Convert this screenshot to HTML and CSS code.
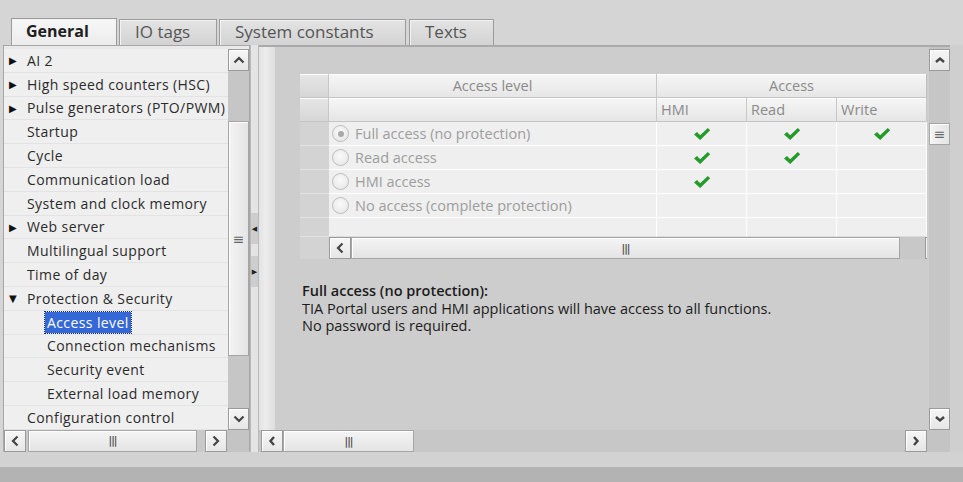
FILE: index.html
```html
<!DOCTYPE html>
<html>
<head>
<meta charset="utf-8">
<link rel="stylesheet" href="styles.css">
</head>
<body>
<div class="app">
  <div class="tabbar">
    <div class="tab active t1">General</div>
    <div class="tab t2">IO tags</div>
    <div class="tab t3">System constants</div>
    <div class="tab t4">Texts</div>
  </div>
  <div class="main">
    <div class="left">
      <div class="left-top">
        <ul class="tree">
          <li class="row"><span class="arr">&#9654;</span>AI 2</li>
          <li class="row"><span class="arr">&#9654;</span>High speed counters (HSC)</li>
          <li class="row"><span class="arr">&#9654;</span>Pulse generators (PTO/PWM)</li>
          <li class="row"><span class="arr"></span>Startup</li>
          <li class="row"><span class="arr"></span>Cycle</li>
          <li class="row"><span class="arr"></span>Communication load</li>
          <li class="row"><span class="arr"></span>System and clock memory</li>
          <li class="row"><span class="arr">&#9654;</span>Web server</li>
          <li class="row"><span class="arr"></span>Multilingual support</li>
          <li class="row"><span class="arr"></span>Time of day</li>
          <li class="row"><span class="arr down">&#9660;</span>Protection &amp; Security</li>
          <li class="row sub"><span class="sel">Access level</span></li>
          <li class="row sub">Connection mechanisms</li>
          <li class="row sub">Security event</li>
          <li class="row sub">External load memory</li>
          <li class="row"><span class="arr"></span>Configuration control</li>
        </ul>
        <div class="vscroll lvs">
          <div class="sbtn"><svg width="12" height="8" viewBox="0 0 12 8"><polyline points="1.5,6.5 6,2 10.5,6.5" fill="none" stroke="#444" stroke-width="2.2"/></svg></div>
          <div class="track t-top-l"></div>
          <div class="thumb lthumb"><span class="grip">&#8801;</span></div>
          <div class="track t-bot-l"></div>
          <div class="sbtn"><svg width="12" height="8" viewBox="0 0 12 8"><polyline points="1.5,1.5 6,6 10.5,1.5" fill="none" stroke="#444" stroke-width="2.2"/></svg></div>
        </div>
      </div>
      <div class="hscroll lhs">
        <div class="sbtn h"><svg width="8" height="12" viewBox="0 0 8 12"><polyline points="6.5,1.5 2,6 6.5,10.5" fill="none" stroke="#444" stroke-width="2.2"/></svg></div>
        <div class="hthumb lht"><span class="hgrip">|||</span></div>
        <div class="htrack"></div>
        <div class="sbtn h"><svg width="8" height="12" viewBox="0 0 8 12"><polyline points="1.5,1.5 6,6 1.5,10.5" fill="none" stroke="#444" stroke-width="2.2"/></svg></div>
        <div class="corner"></div>
      </div>
    </div>
    <div class="splitter">
      <div class="sp-gap1"></div>
      <div class="sp-btn">&#9664;</div>
      <div class="sp-gap2"></div>
      <div class="sp-btn">&#9654;</div>
    </div>
    <div class="right">
      <div class="right-top">
        <div class="strip"></div>
        <div class="content">
          <div class="table">
            <div class="g-rh hd"></div>
            <div class="g-h1 hd span1">Access level</div>
            <div class="g-h1 hd span3">Access</div>
            <div class="g-rh hd"></div>
            <div class="hd"></div>
            <div class="hd sub">HMI</div>
            <div class="hd sub">Read</div>
            <div class="hd sub">Write</div>

            <div class="rh"></div>
            <div class="cell lbl"><span class="radio on"></span>Full access (no protection)</div>
            <div class="cell ck"><svg class="check" width="18" height="14" viewBox="0 0 18 14"><path d="M1 7.5 L4 5 L7.2 8.2 L14.8 1 L17.2 3.3 L7.2 13 Z" fill="#239a2a"/></svg></div>
            <div class="cell ck"><svg class="check" width="18" height="14" viewBox="0 0 18 14"><path d="M1 7.5 L4 5 L7.2 8.2 L14.8 1 L17.2 3.3 L7.2 13 Z" fill="#239a2a"/></svg></div>
            <div class="cell ck"><svg class="check" width="18" height="14" viewBox="0 0 18 14"><path d="M1 7.5 L4 5 L7.2 8.2 L14.8 1 L17.2 3.3 L7.2 13 Z" fill="#239a2a"/></svg></div>

            <div class="rh"></div>
            <div class="cell lbl"><span class="radio"></span>Read access</div>
            <div class="cell ck"><svg class="check" width="18" height="14" viewBox="0 0 18 14"><path d="M1 7.5 L4 5 L7.2 8.2 L14.8 1 L17.2 3.3 L7.2 13 Z" fill="#239a2a"/></svg></div>
            <div class="cell ck"><svg class="check" width="18" height="14" viewBox="0 0 18 14"><path d="M1 7.5 L4 5 L7.2 8.2 L14.8 1 L17.2 3.3 L7.2 13 Z" fill="#239a2a"/></svg></div>
            <div class="cell"></div>

            <div class="rh"></div>
            <div class="cell lbl"><span class="radio"></span>HMI access</div>
            <div class="cell ck"><svg class="check" width="18" height="14" viewBox="0 0 18 14"><path d="M1 7.5 L4 5 L7.2 8.2 L14.8 1 L17.2 3.3 L7.2 13 Z" fill="#239a2a"/></svg></div>
            <div class="cell"></div>
            <div class="cell"></div>

            <div class="rh"></div>
            <div class="cell lbl"><span class="radio"></span>No access (complete protection)</div>
            <div class="cell"></div>
            <div class="cell"></div>
            <div class="cell"></div>

            <div class="rh short"></div>
            <div class="cell short"></div>
            <div class="cell short"></div>
            <div class="cell short"></div>
            <div class="cell short"></div>

            <div class="rh sc"></div>
            <div class="tscroll">
              <div class="sbtn h tb"><svg width="8" height="12" viewBox="0 0 8 12"><polyline points="6.5,1.5 2,6 6.5,10.5" fill="none" stroke="#444" stroke-width="2.2"/></svg></div>
              <div class="hthumb tthumb"><span class="hgrip">|||</span></div>
              <div class="tgap"></div>
              <div class="tedge"></div>
            </div>
          </div>
          <div class="desc">
            <p class="desc-title">Full access (no protection):</p>
            <p>TIA Portal users and HMI applications will have access to all functions.</p>
            <p>No password is required.</p>
          </div>
        </div>
        <div class="vscroll rvs">
          <div class="sbtn"><svg width="12" height="8" viewBox="0 0 12 8"><polyline points="2,6 6,2.5 10,6" fill="none" stroke="#444" stroke-width="2.4"/></svg></div>
          <div class="track t-top-r"></div>
          <div class="thumb rthumb"><span class="grip">&#8801;</span></div>
          <div class="track t-bot-r"></div>
          <div class="sbtn"><svg width="12" height="8" viewBox="0 0 12 8"><polyline points="2,2 6,5.5 10,2" fill="none" stroke="#444" stroke-width="2.4"/></svg></div>
        </div>
      </div>
      <div class="hscroll rhs">
        <div class="sbtn h"><svg width="8" height="12" viewBox="0 0 8 12"><polyline points="6,2 2.5,6 6,10" fill="none" stroke="#444" stroke-width="2.4"/></svg></div>
        <div class="hthumb rht"><span class="hgrip">|||</span></div>
        <div class="htrack"></div>
        <div class="sbtn h"><svg width="8" height="12" viewBox="0 0 8 12"><polyline points="2,2 5.5,6 2,10" fill="none" stroke="#444" stroke-width="2.4"/></svg></div>
        <div class="corner rc"></div>
      </div>
    </div>
    <div class="edge"></div>
  </div>
  <div class="gapband"></div>
  <div class="bottomband"></div>
</div>
</body>
</html>
```

FILE: styles.css
```css
* { box-sizing: border-box; }
html, body { margin: 0; padding: 0; }
body {
  background: #d5d5d5;
  font-family: "Open Sans", "DejaVu Sans", sans-serif;
  color: #2b2b2b;
}
.app { width: 963px; height: 482px; display: flex; flex-direction: column; overflow: hidden; }

/* tabs */
.tabbar { height: 45px; padding: 18px 0 0 11px; display: flex; align-items: flex-end; }
.tab {
  height: 26px;
  border: 1px solid #9b9b9b;
  border-bottom: none;
  background: linear-gradient(#e3e3e3, #d3d3d3);
  font-size: 17px;
  color: #555;
  display: flex; align-items: center; justify-content: flex-start;
  padding: 0 0 3px 15px;
  margin-right: 2px;
  box-shadow: inset 1px 1px 0 #f2f2f2;
}
.tab.active {
  height: 27px;
  background: linear-gradient(#f7f7f7, #ececec);
  color: #1e1e1e;
  font-weight: bold;
  font-size: 16px;
  padding-left: 14px;
  position: relative; z-index: 2;
}
.t1 { width: 106px; }
.t2 { width: 98px; }
.t3 { width: 187px; }
.t4 { width: 85px; margin-left: 1px; }

/* main */
.main { height: 407px; display: flex; }
.left {
  width: 247px; margin-left: 3px;
  border: 1px solid #a7a7a7; border-bottom-color: #c0c0c0;
  background: #e9e9e9;
  padding-top: 3px;
  display: flex; flex-direction: column;
}
.left-top { display: flex; height: 381px; }
.tree { list-style: none; margin: 0; padding: 0; width: 224px; background: #efefef; overflow: hidden; }
.row {
  height: 23.8px;
  border-bottom: 1px solid #e3e3e3;
  display: flex; align-items: center;
  font-size: 14px; color: #2b2b2b;
  white-space: nowrap;
  letter-spacing: 0.4px;
}
.arr { width: 23px; padding-left: 5px; font-size: 10px; color: #111; flex: none; }
.arr.down { font-size: 10px; }
.row.sub { padding-left: 43px; }
.sel {
  background: #3468d6; color: #fff;
  outline: 1px dotted #1b2d6a;
  padding: 1px 2px 1px 2px; margin-left: -2px;
}

/* scrollbars */
.vscroll { width: 21px; display: flex; flex-direction: column; background: #c6c6c6; }
.sbtn {
  width: 21px; height: 22px; flex: none;
  border: 1px solid #9a9a9a;
  background: linear-gradient(#f6f6f6, #e6e6e6);
  box-shadow: inset 1px 1px 0 #fff;
  display: flex; align-items: center; justify-content: center;
}
.track { background: #c6c6c6; }
.t-top-l { height: 50px; }
.lthumb { height: 235px; }
.t-bot-l { flex: 1; }
.thumb {
  border: 1px solid #a5a5a5;
  background: linear-gradient(90deg, #f4f4f4, #e4e4e4);
  box-shadow: inset 1px 1px 0 #fff;
  display: flex; align-items: center; justify-content: center;
}
.grip { font-size: 14px; color: #666; line-height: 1; font-family: "DejaVu Sans", sans-serif; }

.hscroll { height: 22px; display: flex; background: #c9c9c9; }
.sbtn.h { width: 22px; height: 22px; }
.hthumb {
  height: 22px;
  border: 1px solid #a5a5a5;
  background: linear-gradient(#f4f4f4, #e4e4e4);
  box-shadow: inset 1px 1px 0 #fff;
  display: flex; align-items: center; justify-content: center;
}
.hgrip { font-size: 10px; color: #555; letter-spacing: -1px; font-family: "DejaVu Sans", sans-serif; font-weight: bold; }
.lhs .sbtn.h:first-child { margin-right: 2px; }
.lht { width: 169px; }
.htrack { flex: 1; }
.lhs .corner { width: 22px; background: #c4c4c4; }

/* splitter */
.splitter {
  width: 9px;
  background: #e4e4e4;
  border-left: 1px solid #b9b9b9;
  border-right: 1px solid #b9b9b9;
  display: flex; flex-direction: column;
}
.sp-gap1 { height: 168px; }
.sp-gap2 { height: 12px; }
.sp-btn {
  height: 31px; background: #cdcdcd;
  font-size: 7px; color: #222;
  display: flex; align-items: center; justify-content: center;
}

/* right */
.right { width: 691px; display: flex; flex-direction: column; border-top: 2px solid #a9a9a9; }
.right-top { display: flex; height: 383px; }
.strip { width: 16px; background: linear-gradient(90deg, #e3e3e3, #ececec 40%, #dedede); }
.content { width: 654px; background: #cdcdcd; padding: 27px 0 0 25px; }
.rvs { padding-top: 2px; background: #c4c4c4; }
.t-top-r { height: 52px; }
.rthumb { height: 22px; flex: none; }
.t-bot-r { flex: 1; }
.rhs { background: #c7c7c7; }
.rhs .sbtn.h:first-child { margin-left: 2px; }
.rht { width: 131px; }
.rc { width: 23px; background: #c4c4c4; }
.edge { width: 13px; background: #cfcfcf; }

/* table */
.table {
  width: 627px;
  display: grid;
  grid-template-columns: 29px 328px 90px 90px 90px;
  grid-template-rows: 24px 24px 24px 24px 24px 24px 19px 22px;
  background: #efefef;
  font-size: 14.5px;
}
.hd {
  background: linear-gradient(#f6f6f6, #e6e6e6);
  border-right: 1px solid #c8c8c8;
  border-bottom: 1px solid #c4c4c4;
  box-shadow: inset 0 1px 0 #fff;
  color: #8a8a8a;
  display: flex; align-items: center; justify-content: center;
}
.g-rh { background: linear-gradient(#e6e6e6, #d6d6d6); }
.span1 { grid-column: 2; }
.span3 { grid-column: 3 / span 3; border-right-color: #c0c0c0; }
.hd.sub { justify-content: flex-start; padding-left: 4px; }
.rh { background: #d3d3d3; border-bottom: 1px solid #e2e2e2; }
.rh.sc { border-bottom: none; }
.cell {
  border-right: 1px solid #fff;
  border-bottom: 1px solid #fff;
  color: #9d9d9d;
  display: flex; align-items: center;
  white-space: nowrap;
}
.cell.short { border-bottom: 1px solid #dcdcdc; }
.lbl { padding-left: 3px; }
.ck { justify-content: center; }
.check { margin-top: 1px; }
.radio {
  width: 17px; height: 17px; border-radius: 50%;
  border: 1px solid #bdbdbd;
  background: radial-gradient(circle at 50% 40%, #fafafa, #e3e3e3);
  margin-right: 6px;
  display: inline-flex; align-items: center; justify-content: center;
  flex: none;
}
.radio.on::after {
  content: ""; width: 6px; height: 6px; border-radius: 50%; background: #a9a9a9;
}
.tscroll { grid-column: 2 / span 4; display: flex; background: #c8c8c8; }
.tb { width: 23px; }
.tthumb { width: 549px; height: 22px; }
.tgap { flex: 1; }
.tedge { width: 2px; height: 22px; border: 1px solid #9a9a9a; border-right: none; background: #f0f0f0; }

.desc { margin-top: 23px; font-family: "Open Sans", sans-serif; font-size: 14.5px; color: #1c1c1c; letter-spacing: 0; padding-left: 2px; }
.desc p { margin: 0; line-height: 17.5px; }
.desc-title { font-weight: 600; }

.gapband { height: 15px; background: #d2d2d2; }
.bottomband { flex: 1; background: #b3b3b3; }
```
